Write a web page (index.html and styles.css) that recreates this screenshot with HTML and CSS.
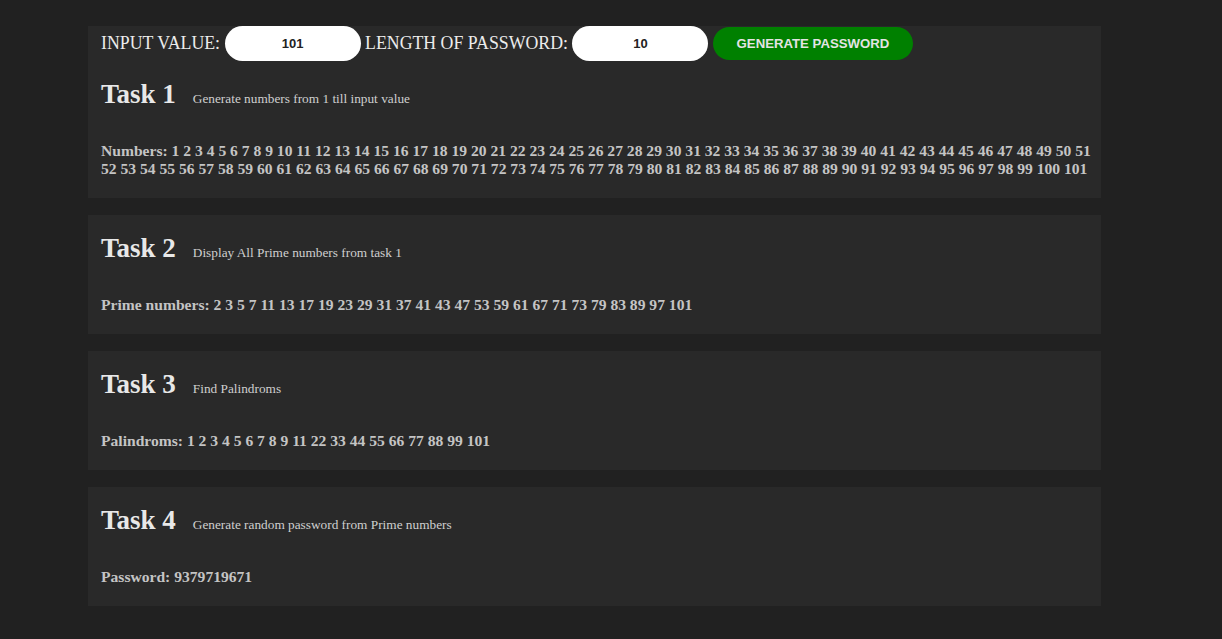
FILE: index.html
```html
<!DOCTYPE html>
<html lang="en">
<head>
<meta charset="utf-8">
<title>Tasks</title>
<link rel="stylesheet" href="styles.css">
</head>
<body>
<main class="page">
  <section class="card">
    <div class="controls">
      <label class="ctl-label" for="inp">INPUT VALUE:</label>
      <input class="ctl-input" id="inp" type="text" value="101">
      <label class="ctl-label" for="len">LENGTH OF PASSWORD:</label>
      <input class="ctl-input" id="len" type="text" value="10">
      <button class="gen-btn" type="button">GENERATE PASSWORD</button>
    </div>
    <div class="task-head">
      <h2 class="task-title">Task 1</h2>
      <span class="task-desc">Generate numbers from 1 till input value</span>
    </div>
    <p class="task-result">Numbers: 1 2 3 4 5 6 7 8 9 10 11 12 13 14 15 16 17 18 19 20 21 22 23 24 25 26 27 28 29 30 31 32 33 34 35 36 37 38 39 40 41 42 43 44 45 46 47 48 49 50 51 52 53 54 55 56 57 58 59 60 61 62 63 64 65 66 67 68 69 70 71 72 73 74 75 76 77 78 79 80 81 82 83 84 85 86 87 88 89 90 91 92 93 94 95 96 97 98 99 100 101</p>
  </section>
  <section class="card">
    <div class="task-head">
      <h2 class="task-title">Task 2</h2>
      <span class="task-desc">Display All Prime numbers from task 1</span>
    </div>
    <p class="task-result">Prime numbers: 2 3 5 7 11 13 17 19 23 29 31 37 41 43 47 53 59 61 67 71 73 79 83 89 97 101</p>
  </section>
  <section class="card">
    <div class="task-head">
      <h2 class="task-title">Task 3</h2>
      <span class="task-desc">Find Palindroms</span>
    </div>
    <p class="task-result">Palindroms: 1 2 3 4 5 6 7 8 9 11 22 33 44 55 66 77 88 99 101</p>
  </section>
  <section class="card">
    <div class="task-head">
      <h2 class="task-title">Task 4</h2>
      <span class="task-desc">Generate random password from Prime numbers</span>
    </div>
    <p class="task-result">Password: 9379719671</p>
  </section>
</main>
</body>
</html>
```

FILE: styles.css
```css
html, body {
  background: #212121;
}
body {
  margin: 8px;
  font-family: "Liberation Serif", "Times New Roman", serif;
  color: #e6e6e6;
}
.page {
  width: 1013px;
  margin: 18px 0 0 80px;
  display: flex;
  flex-direction: column;
  gap: 17px;
}
.card {
  background: #292929;
  padding: 0 4px 20px 13px;
}
.controls {
  display: flex;
  align-items: center;
  height: 35px;
  gap: 4.5px;
}
.ctl-label {
  font-size: 17.8px;
  color: #ececec;
  white-space: nowrap;
}
.ctl-input {
  box-sizing: border-box;
  width: 136px;
  height: 35px;
  border: none;
  border-radius: 17.5px;
  background: #ffffff;
  text-align: center;
  font-family: "Liberation Sans", Arial, sans-serif;
  font-weight: bold;
  font-size: 13px;
  color: #222222;
  padding: 0;
  margin: 0;
  outline: none;
}
.gen-btn {
  box-sizing: border-box;
  width: 200px;
  height: 33px;
  border: none;
  border-radius: 16.5px;
  background: #008000;
  font-family: "Liberation Sans", Arial, sans-serif;
  font-weight: bold;
  font-size: 13.2px;
  color: #e4e4e4;
  padding: 0;
  margin: 0;
  cursor: pointer;
}
.task-head {
  display: flex;
  align-items: baseline;
  gap: 17px;
  padding-top: 18px;
}
.task-title {
  margin: 0;
  font-size: 27px;
  line-height: 30px;
  font-weight: bold;
  color: #e8e8e8;
}
.task-desc {
  font-size: 13.3px;
  color: #cfcfcf;
}
.task-result {
  margin: 33px 0 0;
  font-size: 15.6px;
  line-height: 18px;
  font-weight: bold;
  color: #c4c4c4;
}
```
